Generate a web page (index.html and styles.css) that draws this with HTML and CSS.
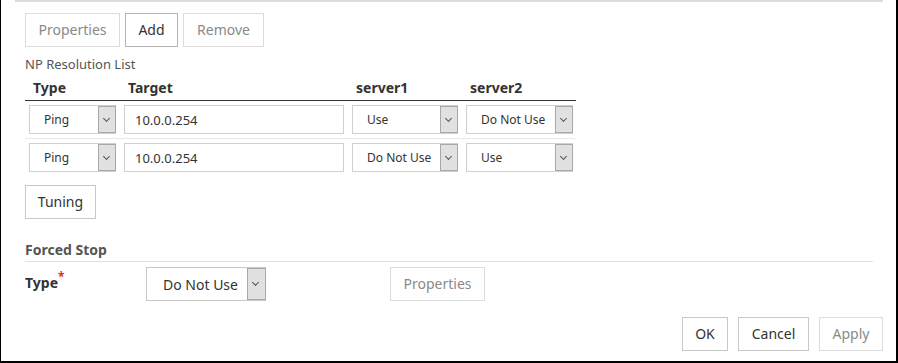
FILE: index.html
```html
<!DOCTYPE html>
<html>
<head>
<meta charset="utf-8">
<link rel="stylesheet" href="styles.css">
</head>
<body>
<div class="frame">
  <div class="topline"></div>
  <div class="toolbar">
    <span class="btn disabled w-props">Properties</span>
    <span class="btn w-add">Add</span>
    <span class="btn disabled w-remove">Remove</span>
  </div>
  <div class="caption">NP Resolution List</div>
  <div class="np-table">
    <div class="hdr">
      <div class="th th-type">Type</div>
      <div class="th th-target">Target</div>
      <div class="th th-s1">server1</div>
      <div class="th th-s2">server2</div>
    </div>
    <div class="row">
      <div class="td td-type"><div class="sel sel-type"><span class="val">Ping</span><span class="arrow"></span></div></div>
      <div class="td td-target"><div class="inp">10.0.0.254</div></div>
      <div class="td td-s1"><div class="sel sel-s1"><span class="val">Use</span><span class="arrow"></span></div></div>
      <div class="td td-s2"><div class="sel sel-s2"><span class="val">Do Not Use</span><span class="arrow"></span></div></div>
    </div>
    <div class="row">
      <div class="td td-type"><div class="sel sel-type"><span class="val">Ping</span><span class="arrow"></span></div></div>
      <div class="td td-target"><div class="inp">10.0.0.254</div></div>
      <div class="td td-s1"><div class="sel sel-s1"><span class="val">Do Not Use</span><span class="arrow"></span></div></div>
      <div class="td td-s2"><div class="sel sel-s2"><span class="val">Use</span><span class="arrow"></span></div></div>
    </div>
  </div>
  <div class="tuning-row"><span class="btn w-tuning">Tuning</span></div>
  <div class="section-title">Forced Stop</div>
  <div class="form-row">
    <div class="label">Type<span class="req">*</span></div>
    <div class="sel sel-fs"><span class="val">Do Not Use</span><span class="arrow"></span></div>
    <span class="btn disabled w-fsprops">Properties</span>
  </div>
  <div class="footer">
    <span class="btn w-ok">OK</span>
    <span class="btn w-cancel">Cancel</span>
    <span class="btn disabled w-apply">Apply</span>
  </div>
</div>
</body>
</html>
```

FILE: styles.css
```css
html, body {
  margin: 0;
  padding: 0;
  background: #fff;
}
body {
  font-family: "Noto Sans", "Open Sans", "Liberation Sans", sans-serif;
  color: #333;
  font-size: 14px;
}
.frame {
  box-sizing: border-box;
  width: 898px;
  height: 363px;
  border-left: 1px solid #000;
  border-right: 2px solid #000;
  border-bottom: 2px solid #000;
  padding-left: 24px;
  display: flex;
  flex-direction: column;
}
.topline {
  height: 2px;
  background: #dcdcdc;
  margin-left: -10px;
  width: 868px;
}
.toolbar {
  display: flex;
  gap: 5px;
  margin-top: 11px;
}
.btn {
  box-sizing: border-box;
  display: inline-flex;
  align-items: center;
  justify-content: center;
  height: 34px;
  padding-bottom: 1px;
  border: 1px solid #c8c8c8;
  background: #fff;
  color: #333;
  font-size: 14px;
}
.btn.disabled {
  color: #8a8a8a;
  border-color: #dcdcdc;
}
.w-add { border-color: #b4b4b4; }
.w-props { width: 95px; }
.w-add { width: 53px; }
.w-remove { width: 81px; }
.w-tuning { width: 71px; }
.w-fsprops { width: 95px; }
.w-ok { width: 46px; }
.w-cancel { width: 71px; }
.w-apply { width: 64px; }
.caption {
  margin-top: 7px;
  font-size: 13px;
  color: #555;
  line-height: 20px;
}
.np-table {
  width: 551px;
}
.hdr {
  display: flex;
  height: 25px;
  align-items: center;
  border-bottom: 1px solid #333;
  margin-top: 1px;
}
.th {
  font-weight: bold;
  font-size: 14px;
  color: #333;
  box-sizing: border-box;
}
.th-type { width: 95px; padding-left: 8px; }
.th-target { width: 228px; padding-left: 8px; }
.th-s1 { width: 114px; padding-left: 8px; }
.th-s2 { width: 114px; padding-left: 8px; }
.row {
  display: flex;
  padding: 4px 0 4px 0;
  border-bottom: 1px solid #e8e8e8;
  height: 29px;
}
.row + .row {
  border-bottom: none;
}
.td {
  box-sizing: border-box;
  padding-left: 4px;
}
.td-type { width: 95px; }
.td-target { width: 228px; }
.td-s1 { width: 114px; }
.td-s2 { width: 114px; }
.sel {
  box-sizing: border-box;
  display: flex;
  align-items: stretch;
  height: 29px;
  border: 1px solid #d0d0d0;
  background: #fff;
  font-size: 12px;
  color: #333;
}
.sel .val {
  flex: 1;
  display: flex;
  align-items: center;
  padding-left: 14px;
  white-space: nowrap;
}
.sel .arrow {
  position: relative;
  width: 16px;
  background: #e1e1e1;
  border: 1px solid #a8a8a8;
  margin: 0 -1px 0 0;
}
.sel .arrow::after {
  content: "";
  position: absolute;
  left: 5px;
  top: 50%;
  width: 4px;
  height: 4px;
  border-right: 1px solid #555;
  border-bottom: 1px solid #555;
  transform: translateY(-4px) rotate(45deg);
}
.sel-type { width: 87px; }
.sel-s1 { width: 106px; }
.sel-s2 { width: 107px; }
.inp {
  box-sizing: border-box;
  width: 220px;
  height: 29px;
  border: 1px solid #d0d0d0;
  padding-left: 10px;
  display: flex;
  align-items: center;
  font-size: 13px;
  color: #333;
}
.tuning-row {
  margin-top: 9px;
}
.section-title {
  margin-top: 21px;
  font-weight: bold;
  font-size: 14px;
  color: #555;
  width: 848px;
  padding-bottom: 1px;
  border-bottom: 1px solid #e0e0e0;
  line-height: 20px;
}
.form-row {
  display: flex;
  align-items: flex-start;
  margin-top: 5px;
}
.label {
  width: 121px;
  font-weight: bold;
  font-size: 14px;
  color: #333;
  padding-top: 6px;
}
.req {
  color: #d9351f;
  font-size: 12px;
  vertical-align: top;
  position: relative;
  top: -5px;
}
.sel-fs {
  width: 120px;
  height: 34px;
  font-size: 14px;
  border-color: #c8c8c8;
}
.sel-fs .val { padding-left: 16px; }
.sel-fs .arrow { width: 17px; }
.form-row .w-fsprops {
  margin-left: 124px;
}
.footer {
  display: flex;
  justify-content: flex-end;
  gap: 10px;
  margin-top: 16px;
  padding-right: 13px;
}
```
